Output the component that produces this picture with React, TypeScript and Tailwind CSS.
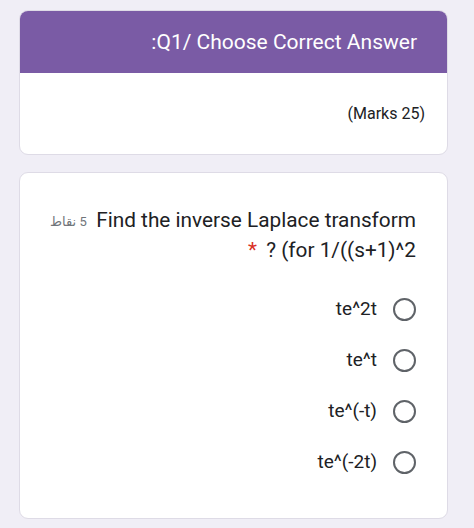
import React from "react";

const options = ["te^2t", "te^t", "te^(-t)", "te^(-2t)"];

export default function App() {
  return (
    <div
      className="min-h-[528px] w-[474px] bg-[#f0eef6] pt-[10px] pl-[19px]"
      style={{ fontFamily: "Roboto, 'Noto Sans', sans-serif" }}
    >
      <div className="w-[429px] overflow-hidden rounded-[9px] border border-[#dedbe6] bg-white">
        <div className="flex h-[62px] items-center justify-end bg-[#7a5ba5] pr-[30px]">
          <span className="text-[21px] leading-none text-white">:Q1/ Choose Correct Answer</span>
        </div>
        <div className="flex h-[81px] items-center justify-end pr-[22px]">
          <span className="text-[16px] text-[#202124]">(Marks 25)</span>
        </div>
      </div>

      <div className="mt-[17px] flex h-[347px] w-[429px] flex-col rounded-[9px] border border-[#dedbe6] bg-white pt-[32px] pr-[31px] pb-[30px] pl-[30px]">
        <div className="flex items-start justify-between">
          <span
            className="mt-[10px] shrink-0 text-[13px] leading-none text-[#70757a]"
            style={{ fontFamily: "Roboto, 'Noto Sans', 'DejaVu Sans', sans-serif" }}
            dir="rtl"
          >
            5 نقاط
          </span>
          <div className="shrink-0 whitespace-nowrap text-right text-[20.8px] leading-[30px] text-[#202124]">
            <div>Find the inverse Laplace transform</div>
            <div>
              <span className="mr-[4px] text-[#d93025]">*</span> ? (for 1/((s+1)^2
            </div>
          </div>
        </div>

        <div className="mt-[19px] flex flex-col">
          {options.map((o) => (
            <div key={o} className="flex h-[51px] items-center justify-end gap-[16px]">
              <span className="text-[19px] text-[#202124]">{o}</span>
              <span className="h-[23px] w-[23px] rounded-full border-[2.5px] border-[#5f6368]" />
            </div>
          ))}
        </div>
      </div>
    </div>
  );
}
